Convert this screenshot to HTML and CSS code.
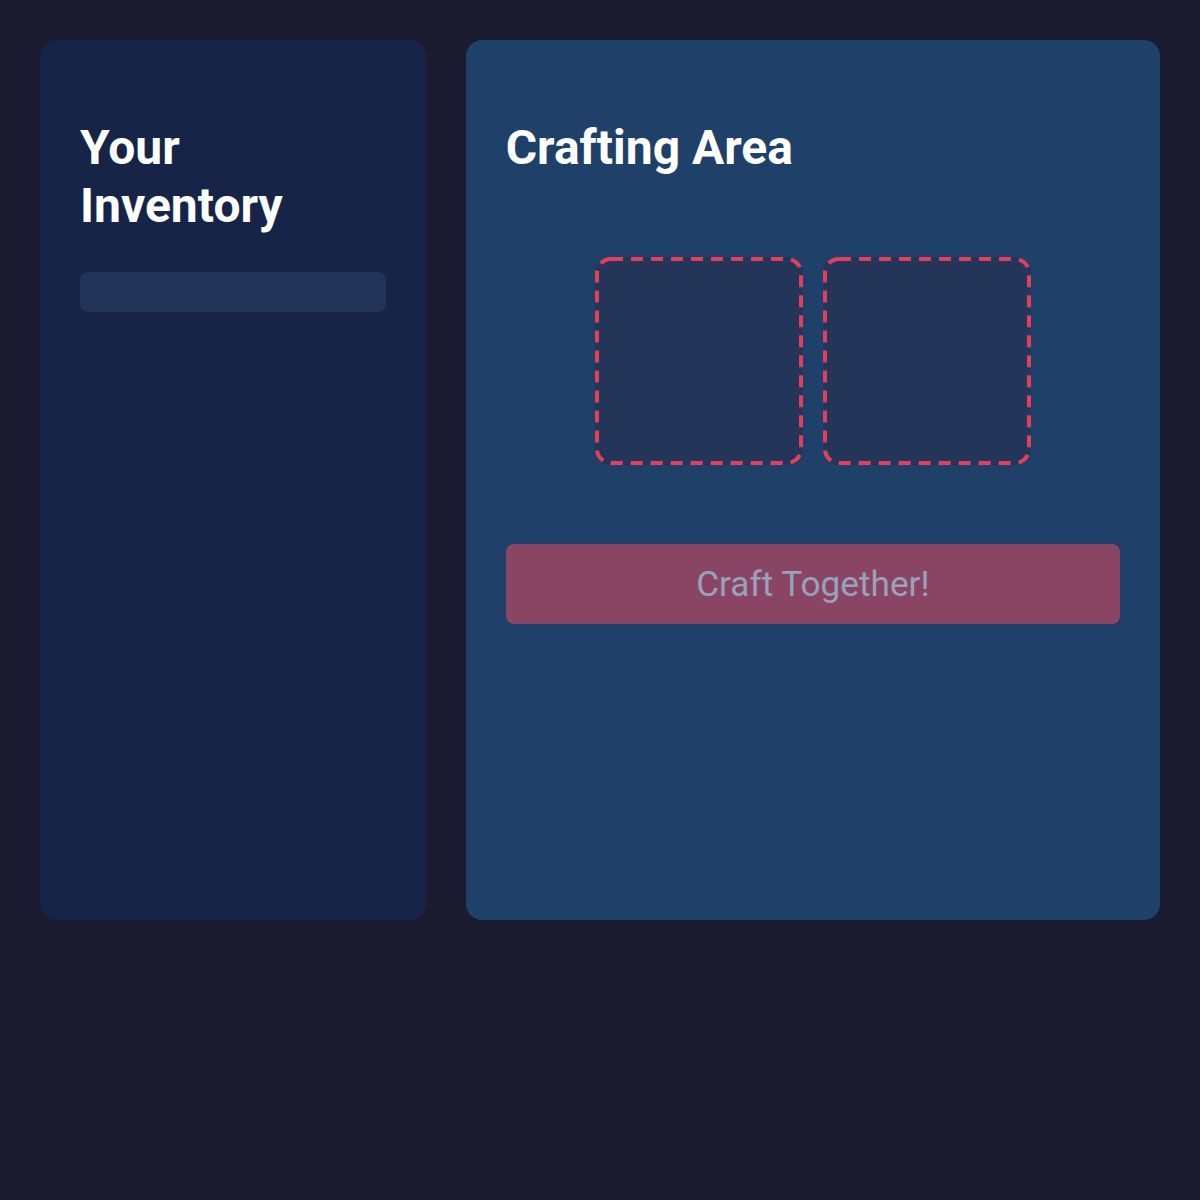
FILE: index.html
```html
<!DOCTYPE html>
<html lang="en">
<head>
    <meta charset="UTF-8">
    <meta name="viewport" content="width=device-width, initial-scale=1.0">
    <title>Crafting Game</title>
    <link rel="stylesheet" href="styles.css">
</head>
<body>
    <div class="game-container">
        <div class="inventory-panel">
            <h2 class="panel-title">Your Inventory</h2>
            <div class="inventory-list"></div>
        </div>

        <div class="crafting-panel">
            <h2 class="panel-title">Crafting Area</h2>
            <div class="crafting-slots">
                <div class="slot">
                    <svg class="slot-border" viewBox="0 0 208 208"><rect x="2" y="2" width="204" height="204" rx="14"/></svg>
                </div>
                <div class="slot">
                    <svg class="slot-border" viewBox="0 0 208 208"><rect x="2" y="2" width="204" height="204" rx="14"/></svg>
                </div>
            </div>
            <button class="craft-btn" disabled>Craft Together!</button>
        </div>
    </div>
</body>
</html>
```

FILE: styles.css
```css
* {
    margin: 0;
    padding: 0;
    box-sizing: border-box;
}

body {
    font-family: 'Roboto', 'Liberation Sans', sans-serif;
    background: #1b1b2f;
    color: #ffffff;
    min-height: 100vh;
    padding: 40px;
}

.game-container {
    display: grid;
    grid-template-columns: 1fr 1.8fr;
    gap: 40px;
}

.inventory-panel,
.crafting-panel {
    min-height: 880px;
    padding: 40px;
    border-radius: 16px;
}

.inventory-panel {
    background: #162447;
}

.crafting-panel {
    background: #1f4068;
}

.panel-title {
    font-size: 3rem;
    font-weight: 700;
    line-height: 1.2;
    margin-top: 39px;
    margin-bottom: 38px;
}

.inventory-list {
    height: 40px;
    background: #243458;
    border-radius: 8px;
}

.crafting-slots {
    display: flex;
    justify-content: center;
    gap: 20px;
    padding: 42px 0 39px;
}

.slot {
    position: relative;
    width: 208px;
    height: 208px;
    background: #233558;
    border-radius: 16px;
}

.slot-border {
    position: absolute;
    top: 0;
    left: 0;
    width: 100%;
    height: 100%;
}

.slot-border rect {
    fill: none;
    stroke: #e43f5a;
    stroke-width: 4;
    stroke-dasharray: 12 8;
}

.craft-btn {
    display: block;
    width: 100%;
    margin-top: 40px;
    padding: 20px;
    font-family: inherit;
    font-size: 2.2rem;
    line-height: 40px;
    color: #97a3ba;
    background: #8a4564;
    border: none;
    border-radius: 8px;
    cursor: not-allowed;
}
```
